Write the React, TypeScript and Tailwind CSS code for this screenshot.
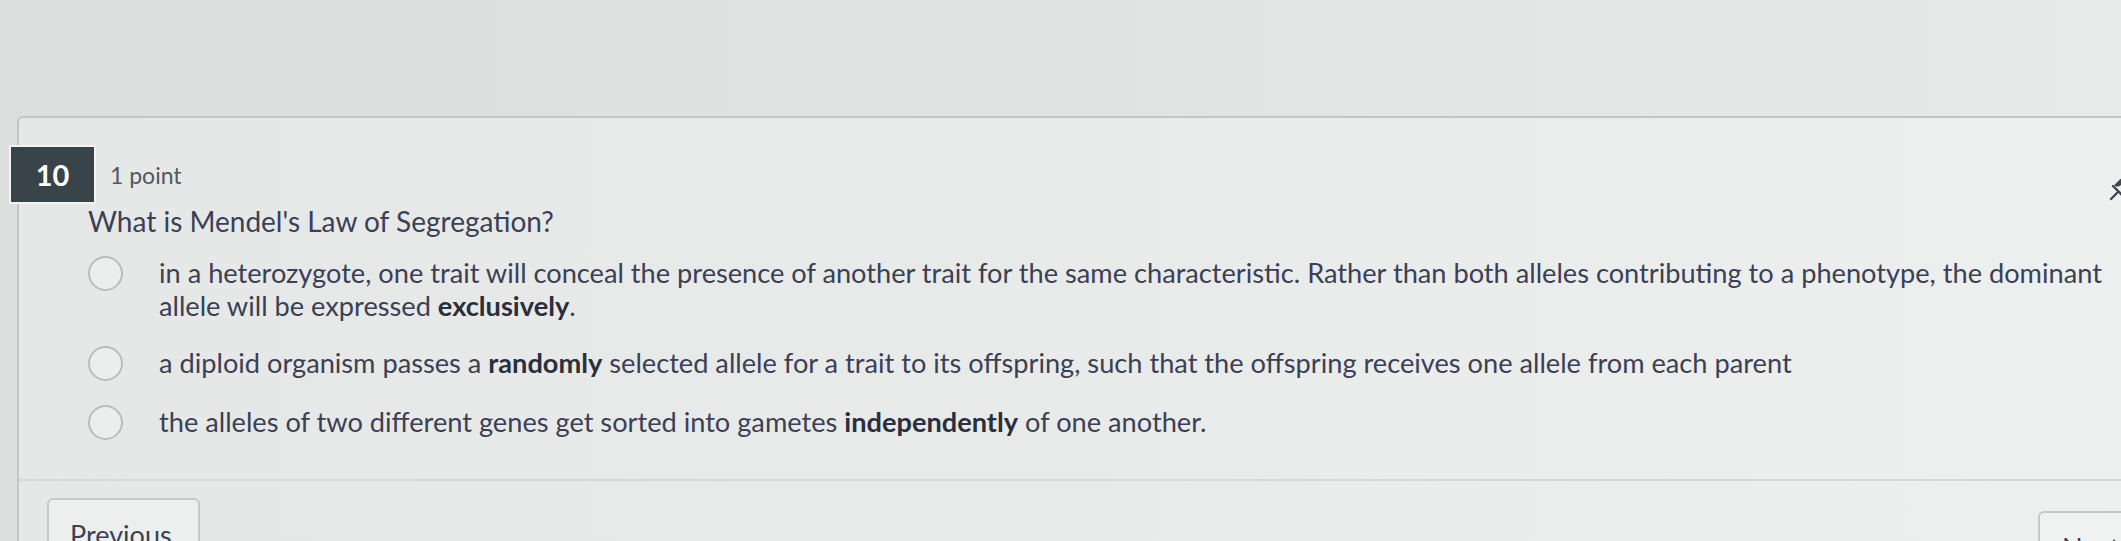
import React from "react";

function Radio() {
  return (
    <span className="block w-[35px] h-[35px] shrink-0 rounded-full border-2 border-[#b9bdbf] bg-[#eceeed]" />
  );
}

function Pin() {
  return (
    <svg width="24" height="24" viewBox="0 0 24 24" className="shrink-0">
      <g stroke="#3f454d" strokeWidth="2.4" fill="none" strokeLinecap="round" strokeLinejoin="round">
        <path d="M2 22 L9 15" />
        <path d="M4 9 L15 20" />
        <path d="M7 8 L12 3 L21 12 L16 17" />
        <path d="M7 8 Q10 9 12 6" />
      </g>
    </svg>
  );
}

export default function App() {
  return (
    <div
      className="w-[2121px] h-[541px] overflow-hidden bg-gradient-to-r from-[#dcdfde] via-[#e1e3e2] to-[#e8eae9] text-[#3b4055]"
      style={{ fontFamily: "Lato, 'Noto Sans', sans-serif" }}
    >
      <div className="pt-[116px]">
        <div className="ml-[17px] w-[2140px] h-[430px] border-t-2 border-l-2 border-[#c2c6c7] rounded-tl-[6px] bg-gradient-to-r from-[#e6e8e7] via-[#e9ebea] to-[#eef0ef]">
          {/* header */}
          <div className="flex items-center mt-[29px] -ml-[8px] w-[2112px]">
            <div className="w-[83px] h-[55px] bg-[#38434a] flex items-center justify-center shadow-[0_0_0_2px_#f3f4f4]">
              <span className="text-white font-bold text-[29px] leading-none">10</span>
            </div>
            <span className="ml-[16px] text-[23px] text-[#505862] leading-none mt-[1px]">1 point</span>
            <div className="ml-auto mt-[28px] translate-x-[10px]">
              <Pin />
            </div>
          </div>

          {/* question */}
          <div className="ml-[69px] mt-[1px] text-[28px] leading-[36px]">
            What is Mendel's Law of Segregation?
          </div>

          {/* options */}
          <div className="ml-[69px] mt-[17px] w-[2030px] flex flex-col gap-[24px] text-[27.2px] leading-[33px]">
            <div className="flex items-start">
              <Radio />
              <p className="ml-[36px]">
                in a heterozygote, one trait will conceal the presence of another trait for the same characteristic. Rather than both alleles contributing to a phenotype, the dominant allele will be expressed <b className="font-bold text-[#2a2e3d]">exclusively</b>.
              </p>
            </div>
            <div className="flex items-start">
              <Radio />
              <p className="ml-[36px]">
                a diploid organism passes a <b className="font-bold text-[#2a2e3d]">randomly</b> selected allele for a trait to its offspring, such that the offspring receives one allele from each parent
              </p>
            </div>
            <div className="flex items-start">
              <Radio />
              <p className="ml-[36px]">
                the alleles of two different genes get sorted into gametes <b className="font-bold text-[#2a2e3d]">independently</b> of one another.
              </p>
            </div>
          </div>

          {/* divider */}
          <div className="mt-[39px] h-[2px] bg-[#d5d8d9] w-full" />

          {/* footer */}
          <div className="flex items-start mt-[17px] pl-[28px]">
            <button className="w-[153px] h-[60px] shrink-0 rounded-[6px] border-2 border-[#c4c9cc] bg-[#edefee] text-left pl-[21px] pt-[13px] text-[27px] leading-none text-[#3b4055]">
              Previous
            </button>
            <button className="ml-[1838px] mt-[13px] w-[120px] h-[60px] shrink-0 rounded-[6px] border-2 border-[#c4c9cc] bg-[#f0f2f1] text-left pl-[22px] pt-[13px] text-[27px] leading-none text-[#3b4055]">
              Next
            </button>
          </div>
        </div>
      </div>
    </div>
  );
}
